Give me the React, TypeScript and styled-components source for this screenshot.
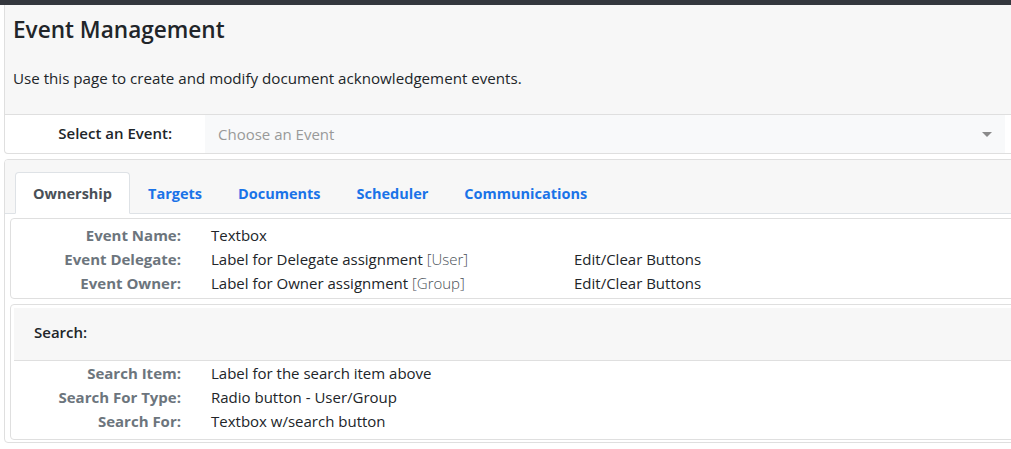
import React from 'react';
import styled, { createGlobalStyle } from 'styled-components';

const GlobalStyle = createGlobalStyle`
  html, body {
    margin: 0;
    padding: 0;
    overflow: hidden;
    background: #ffffff;
  }
  body {
    font-family: "Open Sans", "Noto Sans", Arial, sans-serif;
    font-size: 15px;
    color: #212529;
  }
`;

const TopBar = styled.div`
  height: 5px;
  background-color: #34373e;
`;

const Page = styled.div`
  width: 1030px;
  padding-left: 4px;
  display: flex;
  flex-direction: column;
  gap: 5px;
`;

const Card = styled.div<{ $flatTop?: boolean }>`
  border: 1px solid #dfdfdf;
  border-top-width: ${(p) => (p.$flatTop ? '0' : '1px')};
  border-radius: ${(p) => (p.$flatTop ? '0 0 4px 4px' : '4px')};
  background: #ffffff;
  overflow: hidden;
`;

const PageHeader = styled.div`
  background: #f7f7f7;
  border-bottom: 1px solid #dfdfdf;
  padding: 11px 8px 0;
  height: 98px;
`;

const Title = styled.h1`
  margin: 0;
  font-size: 22.6px;
  font-weight: 600;
  line-height: 28px;
  color: #212529;
`;

const Description = styled.p`
  margin: 23px 0 0;
  font-size: 15.15px;
  line-height: 22px;
`;

const SelectRow = styled.div`
  display: flex;
  align-items: stretch;
  height: 38px;
`;

const SelectLabel = styled.label`
  width: 200px;
  flex-shrink: 0;
  padding-right: 33px;
  box-sizing: border-box;
  text-align: right;
  font-weight: 600;
  font-size: 15px;
  line-height: 36px;
`;

const SelectBox = styled.div`
  width: 800px;
  background: #f8f9fa;
  display: flex;
  align-items: center;
  justify-content: space-between;
  padding: 0 13px;
  box-sizing: border-box;
  color: #999999;
  font-size: 15px;
`;

const Caret = styled.span`
  width: 0;
  height: 0;
  border-left: 5px solid transparent;
  border-right: 5px solid transparent;
  border-top: 5px solid #8a8a8a;
`;

const TabsHeader = styled.div`
  background: #f7f7f7;
  border-bottom: 1px solid #dee2e6;
  padding: 12px 10px 0;
  display: flex;
  height: 41px;
  box-sizing: content-box;
`;

const Tab = styled.div<{ $active?: boolean }>`
  padding: 0 17px;
  height: 42px;
  box-sizing: border-box;
  margin-bottom: -1px;
  display: flex;
  align-items: center;
  font-weight: 700;
  font-size: 14.5px;
  color: ${(p) => (p.$active ? '#495057' : '#1a73e8')};
  background: ${(p) => (p.$active ? '#ffffff' : 'transparent')};
  border: 1px solid ${(p) => (p.$active ? '#dee2e6' : 'transparent')};
  border-bottom-color: ${(p) => (p.$active ? '#ffffff' : 'transparent')};
  border-radius: 4px 4px 0 0;
`;

const TabBody = styled.div`
  padding: 4px 5px 2px;
  display: flex;
  flex-direction: column;
  gap: 5px;
`;

const Panel = styled.div<{ $padded?: boolean }>`
  border: 1px solid #dfdfdf;
  border-radius: 4px;
  padding: ${(p) => (p.$padded ? '3px 3px 6px' : '4px 0 3px')};
`;

const PanelHeader = styled.div`
  background: #f7f7f7;
  border-bottom: 1px solid #dfdfdf;
  height: 53px;
  box-sizing: border-box;
  padding: 0 0 5px 20px;
  display: flex;
  align-items: center;
  font-weight: 600;
  font-size: 15px;
`;

const Row = styled.div<{ $offset?: number }>`
  display: grid;
  grid-template-columns: ${(p) => 185 - (p.$offset ?? 0)}px 363px 1fr;
  height: 24px;
  align-items: center;
  font-size: 15px;
`;

const FieldLabel = styled.span`
  text-align: right;
  padding-right: 15px;
  font-weight: 700;
  color: #6c757d;
  white-space: nowrap;
`;

const FieldValue = styled.span`
  padding-left: 15px;
  white-space: nowrap;
`;

const Hint = styled.span`
  font-weight: 300;
  color: #495057;
`;

type Field = { label: string; value: React.ReactNode; extra?: string };

const ownership: Field[] = [
  { label: 'Event Name:', value: 'Textbox' },
  {
    label: 'Event Delegate:',
    value: (
      <>
        Label for Delegate assignment <Hint>[User]</Hint>
      </>
    ),
    extra: 'Edit/Clear Buttons',
  },
  {
    label: 'Event Owner:',
    value: (
      <>
        Label for Owner assignment <Hint>[Group]</Hint>
      </>
    ),
    extra: 'Edit/Clear Buttons',
  },
];

const search: Field[] = [
  { label: 'Search Item:', value: 'Label for the search item above' },
  { label: 'Search For Type:', value: 'Radio button - User/Group' },
  { label: 'Search For:', value: 'Textbox w/search button' },
];

const tabs = ['Ownership', 'Targets', 'Documents', 'Scheduler', 'Communications'];

function Fields({ items, offset }: { items: Field[]; offset?: number }) {
  return (
    <>
      {items.map((f) => (
        <Row key={f.label} $offset={offset}>
          <FieldLabel>{f.label}</FieldLabel>
          <FieldValue>{f.value}</FieldValue>
          <FieldValue>{f.extra}</FieldValue>
        </Row>
      ))}
    </>
  );
}

export default function App() {
  return (
    <>
      <GlobalStyle />
      <TopBar />
      <Page>
        <Card $flatTop>
          <PageHeader>
            <Title>Event Management</Title>
            <Description>
              Use this page to create and modify document acknowledgement events.
            </Description>
          </PageHeader>
          <SelectRow>
            <SelectLabel>Select an Event:</SelectLabel>
            <SelectBox>
              Choose an Event
              <Caret />
            </SelectBox>
          </SelectRow>
        </Card>

        <Card>
          <TabsHeader>
            {tabs.map((t, i) => (
              <Tab key={t} $active={i === 0}>
                {t}
              </Tab>
            ))}
          </TabsHeader>
          <TabBody>
            <Panel>
              <Fields items={ownership} />
            </Panel>
            <Panel $padded>
              <PanelHeader>Search:</PanelHeader>
              <Fields items={search} offset={3} />
            </Panel>
          </TabBody>
        </Card>
      </Page>
    </>
  );
}
